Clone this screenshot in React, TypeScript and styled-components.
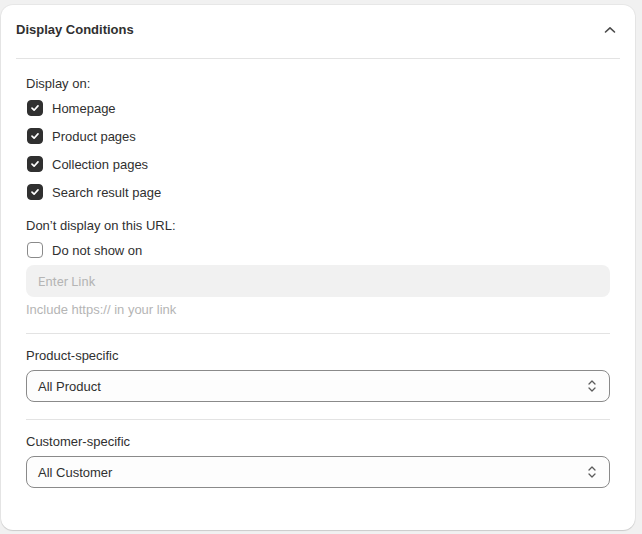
import React from "react";
import styled, { createGlobalStyle } from "styled-components";

const Global = createGlobalStyle`
  html, body { margin: 0; padding: 0; background: #f1f1f1; }
  body { font-family: "Liberation Sans", Arial, sans-serif; color: #303030; }
  * { box-sizing: border-box; }
`;

const Page = styled.div`
  padding: 5px 7px 4px 1px;
`;

const Card = styled.section`
  background: #ffffff;
  border-radius: 12px;
  box-shadow: 0 1px 1px rgba(0,0,0,0.12), 0 0 0 1px rgba(0,0,0,0.04);
  height: 525px;
`;

const Header = styled.div`
  display: flex;
  align-items: center;
  justify-content: space-between;
  padding: 15px 18px 18px 15px;
  height: 53px;
`;

const Title = styled.h2`
  margin: 0;
  font-size: 13px;
  line-height: 20px;
  font-weight: 700;
  color: #303030;
`;

const Divider = styled.hr<{ $inset: number }>`
  border: 0;
  height: 1px;
  background: #e3e3e3;
  margin: 0 ${(p) => p.$inset}px;
`;

const Body = styled.div`
  display: flex;
  flex-direction: column;
  padding: 15px 25px 0 25px;
`;

const Label = styled.div<{ $mt?: number }>`
  font-size: 13px;
  line-height: 20px;
  color: #303030;
  margin-top: ${(p) => p.$mt ?? 0}px;
`;

const Row = styled.label`
  display: flex;
  align-items: center;
  gap: 9px;
  height: 28px;
  font-size: 13px;
  color: #303030;
  padding-left: 1px;
`;

const Box = styled.span<{ $checked: boolean }>`
  width: 16px;
  height: 16px;
  border-radius: 4px;
  display: flex;
  align-items: center;
  justify-content: center;
  background: ${(p) => (p.$checked ? "#303030" : "#ffffff")};
  border: 1px solid ${(p) => (p.$checked ? "#303030" : "#8a8a8a")};
`;

const Input = styled.input`
  margin-top: 1px;
  height: 32px;
  border: 0;
  border-radius: 8px;
  background: #f1f1f1;
  padding: 0 12px;
  font-family: Roboto, "Liberation Sans", sans-serif;
  font-size: 13px;
  color: #303030;
  outline: none;
  &::placeholder { color: #b5b5b5; }
`;

const Help = styled.div`
  margin-top: 3px;
  font-size: 13px;
  line-height: 20px;
  color: #b5b5b5;
`;

const SectionRule = styled.hr<{ $mt: number; $mb: number }>`
  border: 0;
  height: 1px;
  background: #e3e3e3;
  margin: ${(p) => p.$mt}px 0 ${(p) => p.$mb}px;
`;

const Select = styled.div`
  margin-top: 4px;
  height: 32px;
  border: 1px solid #8a8a8a;
  border-radius: 8px;
  background: #fdfdfd;
  display: flex;
  align-items: center;
  justify-content: space-between;
  padding: 0 11px 0 11px;
  font-size: 13px;
  color: #303030;
`;

const Check = () => (
  <svg width="10" height="10" viewBox="0 0 10 10">
    <path d="M2 5.2 L4.1 7.2 L8 2.9" fill="none" stroke="#fff" strokeWidth="1.7" strokeLinecap="round" strokeLinejoin="round" />
  </svg>
);

const ChevronUp = () => (
  <svg width="14" height="14" viewBox="0 0 14 14">
    <path d="M2.5 9 L7 4.8 L11.5 9" fill="none" stroke="#4a4a4a" strokeWidth="1.6" strokeLinecap="round" strokeLinejoin="round" />
  </svg>
);

const UpDown = () => (
  <svg width="12" height="16" viewBox="0 0 12 16">
    <path d="M3 6 L6 3 L9 6" fill="none" stroke="#5c5c5c" strokeWidth="1.3" strokeLinecap="round" strokeLinejoin="round" />
    <path d="M3 10 L6 13 L9 10" fill="none" stroke="#5c5c5c" strokeWidth="1.3" strokeLinecap="round" strokeLinejoin="round" />
  </svg>
);

const CheckRow = ({ label, checked }: { label: string; checked: boolean }) => (
  <Row>
    <Box $checked={checked}>{checked && <Check />}</Box>
    {label}
  </Row>
);

export default function App() {
  return (
    <>
      <Global />
      <Page>
        <Card>
          <Header>
            <Title>Display Conditions</Title>
            <ChevronUp />
          </Header>
          <Divider $inset={15} />
          <Body>
            <Label>Display on:</Label>
            <CheckRow label="Homepage" checked />
            <CheckRow label="Product pages" checked />
            <CheckRow label="Collection pages" checked />
            <CheckRow label="Search result page" checked />
            <Label $mt={10}>Don’t display on this URL:</Label>
            <CheckRow label="Do not show on" checked={false} />
            <Input placeholder="Enter Link" />
            <Help>Include https:// in your link</Help>
            <SectionRule $mt={13} $mb={12} />
            <Label>Product-specific</Label>
            <Select>
              All Product
              <UpDown />
            </Select>
            <SectionRule $mt={17} $mb={12} />
            <Label>Customer-specific</Label>
            <Select>
              All Customer
              <UpDown />
            </Select>
          </Body>
        </Card>
      </Page>
    </>
  );
}
